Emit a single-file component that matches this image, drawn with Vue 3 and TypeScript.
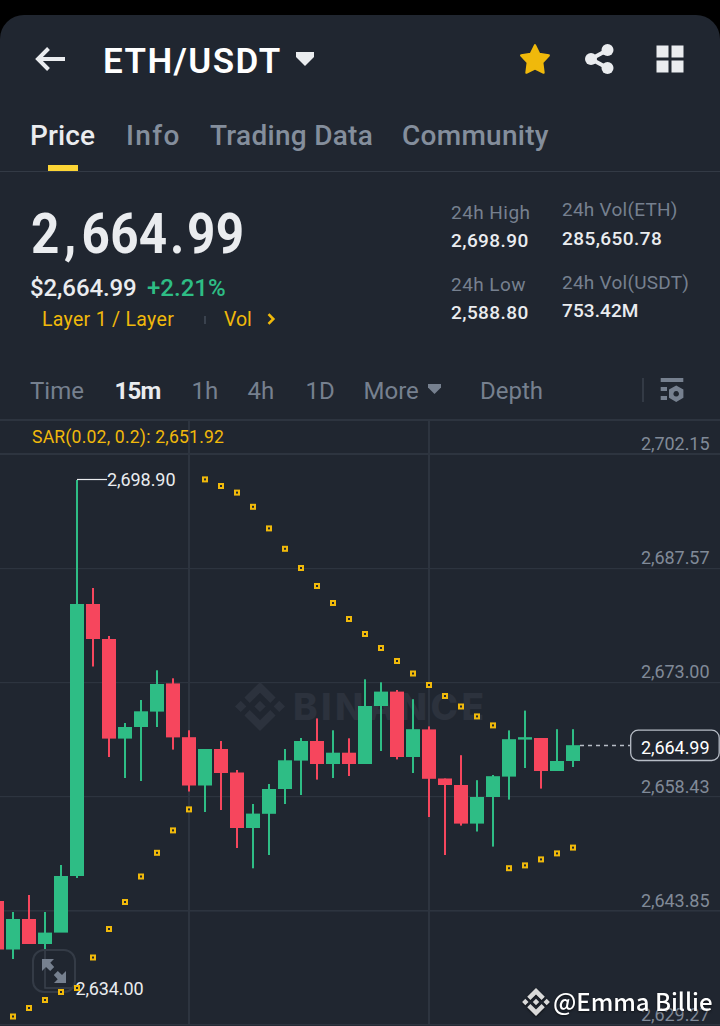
<script setup lang="ts">
interface Candle {
  x: number
  up: boolean
  top: number
  bottom: number
  high: number
  low: number
}

const FIRST_X = -3
const STEP = 16

// direction, body top, body bottom, wick top, wick bottom
const series: [string, number, number, number, number][] = [
  ['d', 901, 949.5, 901, 949.5],
  ['u', 919, 949.5, 912, 959],
  ['d', 919, 944, 895, 944],
  ['u', 932.6, 944, 912, 949],
  ['u', 876, 932.6, 865, 932],
  ['u', 604, 876, 480, 878],
  ['d', 604, 639, 588, 666.5],
  ['d', 639, 738.6, 636, 757],
  ['u', 727, 738.6, 723, 778],
  ['u', 711.3, 727, 700, 781],
  ['u', 684, 711.6, 670.3, 727],
  ['d', 683.4, 737.4, 678.3, 749.6],
  ['d', 737.2, 785.5, 730.3, 791.5],
  ['u', 749, 785.5, 749, 812],
  ['d', 749, 773, 741, 810],
  ['d', 772.5, 828, 770, 848],
  ['u', 813.6, 828, 804, 868.3],
  ['u', 789, 813.8, 784, 855],
  ['u', 760.3, 789, 749, 804],
  ['u', 741, 760.6, 738, 795],
  ['d', 741, 764, 718.4, 779.6],
  ['u', 752.7, 764, 730.3, 778],
  ['d', 752.7, 764, 738.3, 776],
  ['u', 706, 764, 679.3, 764],
  ['u', 691.6, 706, 682.3, 751],
  ['d', 691.6, 757, 690, 759.4],
  ['u', 729.2, 757, 699.2, 773],
  ['d', 729.4, 778.8, 726.4, 817],
  ['d', 778.5, 785, 778.5, 855],
  ['d', 785, 823.6, 755.2, 825.6],
  ['u', 797, 823.6, 780.2, 831.5],
  ['u', 776.2, 797, 775, 846.6],
  ['u', 739.2, 776.6, 730.4, 799.6],
  ['u', 737.2, 739.6, 710.6, 768],
  ['d', 738, 771, 738, 788.6],
  ['u', 761, 771, 729.2, 771],
  ['u', 745.2, 761, 729.2, 767],
]

const candles: Candle[] = series.map(([dir, top, bottom, high, low], i) => ({
  x: FIRST_X + i * STEP,
  up: dir === 'u',
  top,
  bottom,
  high,
  low,
}))

const sarY: number[] = [
  1016.5, 1008, 1000, 992, 988, 957.5, 929, 902, 876.5, 852.8, 830.4, 809.4, 479.4, 486, 492.6, 506.8,
  528.4, 548.8, 568, 586, 603, 619, 634, 648, 661, 673.5, 685, 696, 706.5, 716.4, 725.4, 868.2, 865.4,
  859.4, 853.4, 847.6,
]
const sar = sarY.map((y, i) => ({ x: 13 + i * STEP, y }))

const grid = [
  { y: 419, h: 2 },
  { y: 453, h: 2 },
  { y: 568, h: 1.2 },
  { y: 682, h: 1.2 },
  { y: 796, h: 1.2 },
  { y: 910, h: 1.6 },
  { y: 1024, h: 1.4 },
]

const axis = [
  { y: 450, label: '2,702.15' },
  { y: 564, label: '2,687.57' },
  { y: 678, label: '2,673.00' },
  { y: 793, label: '2,658.43' },
  { y: 907, label: '2,643.85' },
  { y: 1021, label: '2,629.27' },
]
</script>

<template>
  <div class="screen">
    <main class="sheet">
      <header class="topbar">
        <svg class="back" width="30" height="24" viewBox="0 0 30 24">
          <path d="M30 12H3M13.5 1.5L3 12L13.5 22.500" fill="none" stroke="#eaecef" stroke-width="4" />
        </svg>
        <h1 class="pair">ETH/USDT</h1>
        <svg class="pair-caret" width="18" height="14" viewBox="0 0 18 14">
          <path d="M0 0H18V5L9 14L0 5Z" fill="#eaecef" />
        </svg>
        <svg class="star" width="30" height="30" viewBox="0 0 30 30">
          <path
            d="M15 1.200L19.300 9.900L28.800 11.400L22.300 18.500L23.600 28.700L15 24.500L6.400 28.700L7.700 18.500L1.200 11.400L10.700 9.900Z"
            fill="#f0b90b"
            stroke="#f0b90b"
            stroke-width="2.200"
            stroke-linejoin="round"
          />
        </svg>
        <svg class="share" width="30" height="30" viewBox="0 0 30 30">
          <path d="M22.500 6L6 15L22.500 24" fill="none" stroke="#eaecef" stroke-width="4" />
          <circle cx="22.500" cy="6" r="6" fill="#eaecef" />
          <circle cx="6" cy="15" r="6" fill="#eaecef" />
          <circle cx="22.500" cy="24" r="6" fill="#eaecef" />
        </svg>
        <svg class="apps" width="28" height="28" viewBox="0 0 28 28">
          <path d="M.5 .5h12v12h-12zM15.500 .5h12v12h-12zM.5 15.500h12v12h-12zM15.500 15.500h12v12h-12z" fill="#eaecef" />
        </svg>
      </header>

      <nav class="tabs">
        <span class="tab tab-price active">Price</span>
        <span class="tab tab-info">Info</span>
        <span class="tab tab-data">Trading Data</span>
        <span class="tab tab-community">Community</span>
      </nav>

      <section class="summary">
        <div class="quote">
          <div class="last">2<span class="comma">,</span>664<span class="dot">.</span>99</div>
          <div class="fiat">
            <span class="usd">$2,664.99</span>
            <span class="change">+2.21%</span>
          </div>
          <div class="tags">
            <span class="tag-layer">Layer 1 / Layer</span>
            <i class="tag-sep"></i>
            <span class="tag-vol">Vol</span>
            <svg width="9" height="12" viewBox="0 0 9 12">
              <path d="M1.500 1.200L6.300 6L1.500 10.800" fill="none" stroke="#f0b90b" stroke-width="2.600" />
            </svg>
          </div>
        </div>
        <div class="stats stats-range">
          <span class="k k-wide">24h High</span>
          <span class="v">2,698.90</span>
          <span class="k k-wide">24h Low</span>
          <span class="v">2,588.80</span>
        </div>
        <div class="stats stats-volume">
          <span class="k">24h Vol(ETH)</span>
          <span class="v">285,650.78</span>
          <span class="k">24h Vol(USDT)</span>
          <span class="v v-short">753.42M</span>
        </div>
      </section>

      <nav class="intervals">
        <span class="i-time">Time</span>
        <span class="i-15m">15m</span>
        <span>1h</span>
        <span>4h</span>
        <span>1D</span>
        <span class="i-more">More</span>
        <svg class="more-caret" width="13" height="10" viewBox="0 0 13 10">
          <path d="M0 0H13V3.500L6.500 10L0 3.500Z" fill="#76808f" />
        </svg>
        <span class="i-depth">Depth</span>
        <i class="bar"></i>
        <svg class="settings" width="24" height="24" viewBox="0 0 24 24">
          <path d="M.7 0H23.300V4H.7zM.7 9h6.300v4H.7zM.7 18h6.300v4H.7z" fill="#76808f" />
          <path
            fill-rule="evenodd"
            d="M16.200 7.500L23.400 11.500V19.800L16.200 24L9 19.800V11.500ZM16.200 13a2.800 2.800 0 1 0 .01 0Z"
            fill="#76808f"
          />
        </svg>
      </nav>

      <svg class="chart" width="720" height="607" viewBox="0 419 720 607">
        <rect v-for="g in grid" :key="g.y" class="line" x="0" :y="g.y" width="720" :height="g.h" />
        <rect class="line" x="188" y="420" width="2" height="604" />
        <rect class="line" x="428" y="420" width="2" height="604" />

        <g class="brand">
          <path
            d="M260 682L275.600 697.600L270.300 703L260 692.700L249.700 703L244.400 697.600ZM260 731L244.400 715.400L249.700 710L260 720.300L270.300 710L275.600 715.400ZM260 700.700L265.700 706.400L260 712.100L254.300 706.400ZM240.700 700.700L246.400 706.400L240.700 712.100L235 706.400ZM279.300 700.700L285 706.400L279.300 712.100L273.600 706.400Z"
          />
          <text x="293" y="720" textLength="191">BINANCE</text>
        </g>

        <text class="indicator" x="32" y="443" textLength="192">SAR(0.02, 0.2): 2,651.92</text>

        <text v-for="a in axis" :key="a.y" class="axis" x="641" :y="a.y" textLength="68.500">{{ a.label }}</text>

        <path d="M45 949V988H77" class="leader-low" />

        <g v-for="c in candles" :key="c.x" :class="c.up ? 'up' : 'down'">
          <rect :x="c.x - 1" :y="c.high" width="2" :height="c.low - c.high" />
          <rect :x="c.x - 7" :y="c.top" width="14" :height="c.bottom - c.top" />
        </g>

        <path d="M77 479.500H107" class="leader" />
        <text class="mark" x="107" y="486" textLength="68.500">2,698.90</text>
        <text class="mark" x="75.500" y="995" textLength="68">2,634.00</text>

        <rect class="expand" x="33" y="950" width="42" height="42" rx="11" />
        <path
          d="M42 959H54L50.300 962.700L54.200 967L50.200 971L46 967L42 971ZM66 983H54L57.700 979.300L53.800 975L57.800 971L62 975L66 971Z"
          fill="#76808f"
        />

        <rect v-for="s in sar" :key="s.x" class="sar" :x="s.x - 2" :y="s.y - 2" width="4" height="4" />

        <path d="M580 745.500H630" class="dash" />
        <rect class="price-box" x="630.700" y="730.200" width="88.500" height="30.300" rx="7.500" />
        <text class="price-text" x="641" y="754" textLength="68.500">2,664.99</text>

        <g class="author">
          <path
            d="M536 988L544.800 996.800L541.600 1000L536 994.400L530.400 1000L527.200 996.800ZM536 1016L527.200 1007.200L530.400 1004L536 1009.600L541.600 1004L544.800 1007.200ZM536 998.800L539.200 1002L536 1005.200L532.800 1002ZM525.300 998.800L528.500 1002L525.300 1005.200L522.100 1002ZM546.700 998.800L549.900 1002L546.700 1005.200L543.500 1002Z"
            fill="#d9d9d9"
          />
          <text x="553" y="1010.600" textLength="159.500">@Emma Billie</text>
        </g>
      </svg>
    </main>
  </div>
</template>

<style>
body {
  margin: 0;
  background: #000;
}
</style>

<style scoped>
.screen {
  width: 720px;
  height: 1026px;
  box-sizing: border-box;
  padding-top: 15px;
  overflow: hidden;
  background: #000;
  font-family: Roboto, "Liberation Sans", sans-serif;
  color: #eaecef;
  white-space: nowrap;
}
.sheet {
  height: 1011px;
  background: #202630;
  border-radius: 24px 24px 0 0;
  overflow: hidden;
}
svg {
  display: block;
  flex: none;
}
.topbar {
  height: 88px;
  display: flex;
  align-items: center;
  padding-left: 35px;
}
.pair {
  width: 192px;
  margin: 6px 0 0 38px;
  font-size: 35px;
  line-height: 40px;
  font-weight: 600;
  letter-spacing: 1.4px;
  color: #fff;
}
.pair-caret {
  margin-left: 1px;
}
.star {
  margin-left: 206px;
}
.share {
  margin-left: 35px;
}
.apps {
  margin-left: 41px;
}
.tabs {
  height: 69px;
  box-sizing: border-box;
  border-bottom: 1px solid #333a45;
  padding: 17px 0 0 30px;
  display: flex;
  font-size: 28px;
  line-height: 32px;
  font-weight: 500;
  letter-spacing: 0.28px;
  color: #848e9c;
}
.tab {
  position: relative;
}
.tab-price {
  width: 96px;
  letter-spacing: 0.1px;
}
.tab-info {
  width: 84px;
  letter-spacing: 1.4px;
}
.tab-data {
  width: 192px;
}
.active {
  color: #eaecef;
}
.active::after {
  content: "";
  position: absolute;
  left: 18px;
  top: 45px;
  width: 30px;
  height: 6px;
  background: #fcd535;
}
.summary {
  height: 188px;
  box-sizing: border-box;
  display: grid;
  grid-template-columns: 421px 111px 158px;
  padding-left: 30px;
}
.quote {
  padding-top: 30px;
}
.last {
  font-size: 56px;
  line-height: 64px;
  font-weight: 700;
  letter-spacing: 0.2px;
  transform: translateX(1px) scaleX(0.883);
  transform-origin: left;
}
.comma {
  padding: 0 6px 0 5px;
}
.dot {
  padding: 0 3px;
}
.fiat {
  margin-top: 7px;
  display: flex;
  font-size: 24px;
  line-height: 30px;
  font-weight: 500;
}
.usd {
  width: 117px;
  letter-spacing: -0.1px;
}
.change {
  color: #2ebd85;
}
.tags {
  margin-top: 5px;
  padding-left: 12px;
  display: flex;
  align-items: center;
  font-size: 19.5px;
  line-height: 24px;
  color: #f0b90b;
}
.tags svg {
  margin-top: -2px;
}
.tag-layer {
  width: 162px;
  letter-spacing: 0.3px;
}
.tag-sep {
  width: 2px;
  height: 8px;
  margin: -1px 18px 0 0;
  background: #3a424e;
}
.tag-vol {
  width: 43px;
}
.stats {
  display: grid;
  align-content: start;
  font-size: 19px;
  line-height: 24px;
}
.stats-range {
  padding-top: 29px;
  grid-template-rows: 28px 44px 28px 24px;
}
.stats-volume {
  padding-top: 26px;
  grid-template-rows: 29px 44px 28px 24px;
}
.k {
  color: #76808f;
  letter-spacing: 0.25px;
}
.k-wide {
  letter-spacing: 0.45px;
}
.v {
  font-weight: 500;
  letter-spacing: 0.42px;
}
.v-short {
  letter-spacing: 0.1px;
}
.intervals {
  height: 59px;
  box-sizing: border-box;
  padding: 2px 0 0 30px;
  display: grid;
  grid-template-columns: 84.5px 77px 56px 58px 58px 64px 52.5px 162px 18px 24px;
  align-items: center;
  font-size: 24px;
  line-height: 28px;
  color: #76808f;
}
.i-15m {
  font-weight: 700;
  letter-spacing: -0.8px;
  color: #eaecef;
}
.more-caret {
  margin-top: -4px;
}
.bar {
  width: 2px;
  height: 24px;
  margin-top: -2px;
  background: #333a45;
}
.settings {
  margin-top: -2px;
}
.line {
  fill: #2d343f;
}
.brand {
  fill: #2c323d;
}
.brand text {
  font: 800 37px Inter, sans-serif;
}
.indicator {
  font-size: 17.6px;
  fill: #f0b90b;
}
.axis {
  font-size: 18px;
  fill: #808a98;
}
.mark {
  font-size: 18px;
  fill: #eaecef;
}
.up {
  fill: #2ebd85;
}
.down {
  fill: #f6465d;
}
.leader {
  stroke: #eaecef;
  stroke-width: 1.2;
}
.leader-low {
  fill: none;
  stroke: #3a414c;
  stroke-width: 1.5;
}
.expand {
  fill: none;
  stroke: #343b46;
  stroke-width: 2;
}
.sar {
  fill: #202630;
  stroke: #f0b90b;
  stroke-width: 2;
}
.dash {
  stroke: #b7bdc6;
  stroke-width: 1.4;
  stroke-dasharray: 4 4;
}
.price-box {
  fill: #202630;
  stroke: #b7bdc6;
  stroke-width: 1.3;
}
.price-text {
  font-size: 18px;
  fill: #fff;
}
.author {
  fill: #fff;
  filter: drop-shadow(0 1px 1px rgba(0, 0, 0, 0.6));
}
.author text {
  font: 500 24px "Noto Sans CJK SC", "Noto Sans", sans-serif;
}
</style>
